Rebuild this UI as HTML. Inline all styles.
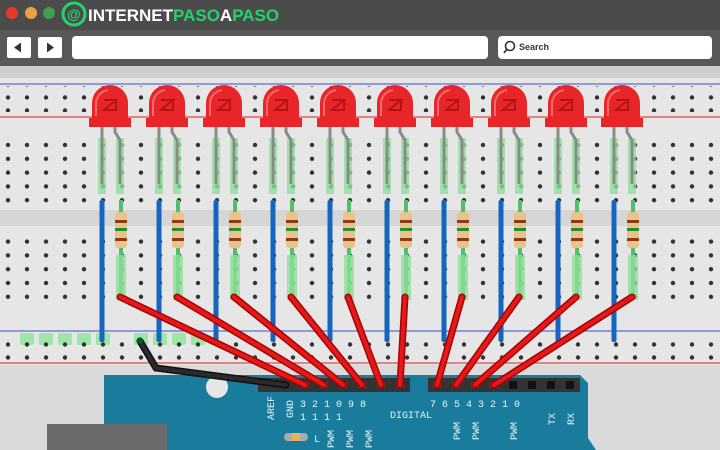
<!DOCTYPE html><html><head><style>body{margin:0;width:720px;height:450px;overflow:hidden;background:#dadada}svg{display:block}</style></head><body>
<svg width="720" height="450" xmlns="http://www.w3.org/2000/svg" font-family="Liberation Sans, sans-serif">
<defs>
<pattern id="h" x="76" y="0" width="19" height="13.8" patternUnits="userSpaceOnUse"><circle cx="8" cy="7" r="2.2" fill="#333"/></pattern>
<pattern id="r" x="76" y="0" width="19" height="13" patternUnits="userSpaceOnUse"><circle cx="8" cy="6.5" r="2.2" fill="#333"/></pattern>
<g id="led">
<rect x="-12" y="138" width="8" height="56" fill="#8de09a" opacity=".8"/><rect x="6" y="138" width="8" height="56" fill="#8de09a" opacity=".8"/>
<rect x="-9.5" y="126" width="3" height="58" fill="#8a8a8a"/><path d="M5 126 v6 l5 8 v44" fill="none" stroke="#8a8a8a" stroke-width="3"/>
<rect x="-10.5" y="200" width="5" height="142" fill="#1565c0" rx="2"/>
<rect x="9" y="200" width="4" height="98" fill="#4fbf6a"/>
<rect x="5" y="212" width="12" height="36" rx="3" fill="#e8c48a"/><rect x="5" y="220" width="12" height="3" fill="#8b3a1a"/><rect x="5" y="228" width="12" height="3" fill="#2b8a3a"/><rect x="5" y="238" width="12" height="3" fill="#8b3a1a"/>
<rect x="6" y="255" width="10" height="45" fill="#8de09a" opacity=".8"/>
<path d="M-18 118 V103 a18 18 0 0 1 36 0 V118 h3 v9 h-42 v-9z" fill="#e8262a"/><path d="M-14 116 V103 a14 14 0 0 1 12 -13" fill="none" stroke="#f36b6b" stroke-width="2"/><path d="M-6 100 h12 l-12 10 h12 v-10" fill="none" stroke="#b41418" stroke-width="2"/>
</g>
</defs>
<rect width="720" height="30" fill="#4b4b4b"/>
<circle cx="12" cy="13" r="6" fill="#e8362a"/><circle cx="31" cy="13" r="6" fill="#f0a040"/><circle cx="49" cy="13" r="6" fill="#3ea04a"/>
<circle cx="74" cy="14" r="11" fill="none" stroke="#22d36a" stroke-width="3"/><text x="74" y="19" font-size="14" font-weight="bold" fill="#22d36a" text-anchor="middle">@</text>
<text x="88" y="21" font-size="17" font-weight="bold" fill="#fff">INTERNET<tspan fill="#22d36a">PASO</tspan>A<tspan fill="#22d36a">PASO</tspan></text>
<rect y="30" width="720" height="36" fill="#585858"/>
<rect x="7" y="37" width="24" height="21" rx="2" fill="#fff"/><path d="M14 47.5 l7 -5 v10z" fill="#333"/>
<rect x="38" y="37" width="24" height="21" rx="2" fill="#fff"/><path d="M54 47.5 l-7 -5 v10z" fill="#333"/>
<rect x="72" y="36" width="416" height="23" rx="4" fill="#fff"/>
<rect x="498" y="36" width="214" height="23" rx="4" fill="#fff"/><circle cx="510" cy="46" r="4.5" fill="none" stroke="#333" stroke-width="1.6"/><path d="M507 49 l-3 4" stroke="#333" stroke-width="1.8"/><text x="519" y="50" font-size="9" font-weight="bold" fill="#333">Search</text>
<rect y="66" width="720" height="14" fill="#cfcfcf"/>
<rect y="78" width="720" height="287" fill="#e6e6e6"/>
<line x1="0" y1="84" x2="720" y2="84" stroke="#5b6ed0" stroke-width="1.2"/>
<line x1="0" y1="117" x2="720" y2="117" stroke="#e04848" stroke-width="1.2"/>
<rect x="0" y="86" width="720" height="26" fill="url(#r)"/>
<rect x="0" y="140" width="720" height="68" fill="url(#h)"/>
<rect x="0" y="210" width="720" height="16" fill="#d6d6d6"/>
<rect x="0" y="236" width="720" height="70" fill="url(#h)"/>
<line x1="0" y1="331" x2="720" y2="331" stroke="#5b6ed0" stroke-width="1.2"/>
<g fill="#9de6a8"><rect x="20" y="333" width="14" height="12" rx="2"/><rect x="39" y="333" width="14" height="12" rx="2"/><rect x="58" y="333" width="14" height="12" rx="2"/><rect x="77" y="333" width="14" height="12" rx="2"/><rect x="96" y="333" width="14" height="12" rx="2"/><rect x="134" y="333" width="14" height="12" rx="2"/><rect x="153" y="333" width="14" height="12" rx="2"/><rect x="172" y="333" width="14" height="12" rx="2"/><rect x="191" y="333" width="14" height="12" rx="2"/></g>
<rect x="0" y="334" width="720" height="26" fill="url(#r)"/>
<line x1="0" y1="363" x2="720" y2="363" stroke="#e04848" stroke-width="1.2"/>
<use href="#led" x="110" y="0"/><use href="#led" x="167" y="0"/><use href="#led" x="224" y="0"/><use href="#led" x="281" y="0"/><use href="#led" x="338" y="0"/><use href="#led" x="395" y="0"/><use href="#led" x="452" y="0"/><use href="#led" x="509" y="0"/><use href="#led" x="566" y="0"/><use href="#led" x="622" y="0"/>
<path d="M104 375 H580 l8 8 V438 l8 12 H104z" fill="#1a7c9c"/>
<rect x="47" y="424" width="120" height="26" fill="#6a6a6a"/>
<circle cx="217" cy="387" r="11" fill="#e6e6e6"/>
<rect x="258" y="378" width="152" height="14" fill="#333"/>
<rect x="428" y="378" width="152" height="14" fill="#333"/>
<g fill="#8a2a1a"><rect x="301" y="382" width="8" height="6"/><rect x="320" y="382" width="8" height="6"/><rect x="339" y="382" width="8" height="6"/><rect x="358" y="382" width="8" height="6"/><rect x="377" y="382" width="8" height="6"/><rect x="396" y="382" width="8" height="6"/><rect x="433" y="382" width="8" height="6"/><rect x="452" y="382" width="8" height="6"/><rect x="471" y="382" width="8" height="6"/><rect x="490" y="382" width="8" height="6"/></g>
<g fill="#111"><rect x="509" y="381" width="8" height="8"/><rect x="528" y="381" width="8" height="8"/><rect x="547" y="381" width="8" height="8"/><rect x="566" y="381" width="8" height="8"/></g>
<g stroke="#111" stroke-width="7" stroke-linecap="round" fill="none"><path d="M140 341 l16 27 l130 17"/></g>
<g stroke="#2a2a2a" stroke-width="4" stroke-linecap="round" fill="none"><path d="M140 341 l16 27 l130 17"/></g>
<circle cx="140" cy="341" r="3" fill="#0a5a2a"/>
<g stroke="#a00" stroke-width="7" stroke-linecap="round"><line x1="120" y1="297" x2="305" y2="385"/><line x1="177" y1="297" x2="324" y2="385"/><line x1="234" y1="297" x2="343" y2="385"/><line x1="291" y1="297" x2="362" y2="385"/><line x1="348" y1="297" x2="381" y2="385"/><line x1="405" y1="297" x2="400" y2="385"/><line x1="462" y1="297" x2="437" y2="385"/><line x1="519" y1="297" x2="456" y2="385"/><line x1="576" y1="297" x2="475" y2="385"/><line x1="632" y1="297" x2="494" y2="385"/></g>
<g stroke="#e31a1a" stroke-width="4" stroke-linecap="round"><line x1="120" y1="297" x2="305" y2="385"/><line x1="177" y1="297" x2="324" y2="385"/><line x1="234" y1="297" x2="343" y2="385"/><line x1="291" y1="297" x2="362" y2="385"/><line x1="348" y1="297" x2="381" y2="385"/><line x1="405" y1="297" x2="400" y2="385"/><line x1="462" y1="297" x2="437" y2="385"/><line x1="519" y1="297" x2="456" y2="385"/><line x1="576" y1="297" x2="475" y2="385"/><line x1="632" y1="297" x2="494" y2="385"/></g>
<g fill="#e8f4f8" font-family="Liberation Mono, monospace" font-size="10">
<text transform="translate(274,420) rotate(-90)">AREF</text><text transform="translate(293,418) rotate(-90)">GND</text>
<text x="300" y="407">3 2 1 0 9 8</text><text x="300" y="420">1 1 1 1</text>
<text x="390" y="418">DIGITAL</text>
<text x="430" y="407">7 6 5 4 3 2 1 0</text>
<text transform="translate(334,448) rotate(-90)">PWM</text><text transform="translate(353,448) rotate(-90)">PWM</text><text transform="translate(372,448) rotate(-90)">PWM</text>
<text transform="translate(460,440) rotate(-90)">PWM</text><text transform="translate(479,440) rotate(-90)">PWM</text><text transform="translate(517,440) rotate(-90)">PWM</text>
<text transform="translate(555,425) rotate(-90)">TX</text><text transform="translate(574,425) rotate(-90)">RX</text>
<text x="314" y="442">L</text></g>
<rect x="284" y="433" width="24" height="8" rx="4" fill="#aaa"/><rect x="292" y="433" width="8" height="8" fill="#e8b060"/>
</svg></body></html>
